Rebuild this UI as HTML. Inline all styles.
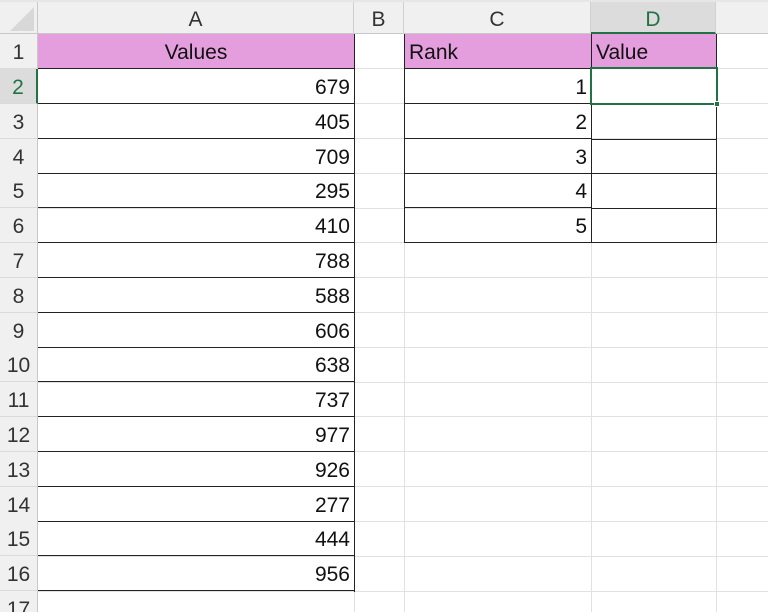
<!DOCTYPE html>
<html style="width:768px;height:612px;overflow:hidden"><head><meta charset="utf-8"><style>
body{margin:0;width:768px;height:612px;overflow:hidden;background:#fff;font-family:"Liberation Sans",sans-serif;position:relative}
div{position:absolute;box-sizing:border-box}
.h{left:0;width:768px;height:1px;background:#e1e1e1}
.v{top:34px;height:578px;width:1px;background:#e1e1e1}
.rn{left:0;width:38px;height:35px;background:#f0f0f0;color:#333;font-size:21px;line-height:38px;text-align:center;border-right:1px solid #c8c8c8;border-bottom:1px solid #dadada}
.c{font-size:21px;line-height:38px;height:35px;color:#111;overflow:hidden}
.r{text-align:right;padding-right:4px}
</style></head><body>
<div style="left:0;top:0;width:768px;height:34px;background:#f0f0f0;border-top:2px solid #e6e6e6;border-bottom:1px solid #c8c8c8"></div>
<div style="left:38px;top:2px;width:316px;height:32px;text-align:center;font-size:21px;line-height:36px;color:#333;border-right:1px solid #d0d0d0">A</div>
<div style="left:354px;top:2px;width:50px;height:32px;text-align:center;font-size:21px;line-height:36px;color:#333;border-right:1px solid #d0d0d0">B</div>
<div style="left:404px;top:2px;width:187px;height:32px;text-align:center;font-size:21px;line-height:36px;color:#333;border-right:1px solid #d0d0d0">C</div>
<div style="left:591px;top:2px;width:125px;height:32px;text-align:center;font-size:21px;line-height:36px;color:#217346;background:#dcdcdc;border-bottom:2px solid #217346;border-right:1px solid #d0d0d0">D</div>
<div style="left:0;top:2px;width:38px;height:32px;border-right:1px solid #c8c8c8"><div style="right:3px;bottom:3px;width:0;height:0;border-left:24px solid transparent;border-bottom:24px solid #d8d8d8"></div></div>
<div class="h" style="top:68px"></div><div class="h" style="top:103px"></div><div class="h" style="top:138px"></div><div class="h" style="top:173px"></div><div class="h" style="top:208px"></div><div class="h" style="top:242px"></div><div class="h" style="top:277px"></div><div class="h" style="top:312px"></div><div class="h" style="top:347px"></div><div class="h" style="top:382px"></div><div class="h" style="top:416px"></div><div class="h" style="top:451px"></div><div class="h" style="top:486px"></div><div class="h" style="top:521px"></div><div class="h" style="top:556px"></div><div class="h" style="top:591px"></div>
<div class="v" style="left:354px"></div><div class="v" style="left:404px"></div><div class="v" style="left:591px"></div><div class="v" style="left:716px"></div>
<div class="rn" style="top:34px">1</div>
<div class="rn" style="top:69px;color:#217346;background:#dcdcdc;border-right:2px solid #217346">2</div>
<div class="rn" style="top:104px">3</div><div class="rn" style="top:139px">4</div><div class="rn" style="top:173px">5</div><div class="rn" style="top:208px">6</div><div class="rn" style="top:243px">7</div><div class="rn" style="top:278px">8</div><div class="rn" style="top:313px">9</div><div class="rn" style="top:347px">10</div><div class="rn" style="top:382px">11</div><div class="rn" style="top:417px">12</div><div class="rn" style="top:452px">13</div><div class="rn" style="top:487px">14</div><div class="rn" style="top:521px">15</div><div class="rn" style="top:556px">16</div><div class="rn" style="top:591px;height:21px;overflow:hidden;border-bottom:none">17</div>
<div class="c" style="left:38px;top:34px;width:317px;background:#e49edd;text-align:center;border-right:1px solid #222;border-bottom:1px solid #222">Values</div>
<div style="left:38px;top:68px;width:317px;height:524px;border-right:1px solid #222"></div>
<div class="c r" style="left:38px;top:69px;width:316px;border-bottom:1px solid #222">679</div>
<div class="c r" style="left:38px;top:104px;width:316px;border-bottom:1px solid #222">405</div>
<div class="c r" style="left:38px;top:139px;width:316px;border-bottom:1px solid #222">709</div>
<div class="c r" style="left:38px;top:173px;width:316px;border-bottom:1px solid #222">295</div>
<div class="c r" style="left:38px;top:208px;width:316px;border-bottom:1px solid #222">410</div>
<div class="c r" style="left:38px;top:243px;width:316px;border-bottom:1px solid #222">788</div>
<div class="c r" style="left:38px;top:278px;width:316px;border-bottom:1px solid #222">588</div>
<div class="c r" style="left:38px;top:313px;width:316px;border-bottom:1px solid #222">606</div>
<div class="c r" style="left:38px;top:347px;width:316px;border-bottom:1px solid #222">638</div>
<div class="c r" style="left:38px;top:382px;width:316px;border-bottom:1px solid #222">737</div>
<div class="c r" style="left:38px;top:417px;width:316px;border-bottom:1px solid #222">977</div>
<div class="c r" style="left:38px;top:452px;width:316px;border-bottom:1px solid #222">926</div>
<div class="c r" style="left:38px;top:487px;width:316px;border-bottom:1px solid #222">277</div>
<div class="c r" style="left:38px;top:521px;width:316px;border-bottom:1px solid #222">444</div>
<div class="c r" style="left:38px;top:556px;width:316px;border-bottom:1px solid #222">956</div>
<div class="c" style="left:404px;top:34px;width:187px;background:#e49edd;padding-left:4px;border-left:1px solid #222;border-bottom:1px solid #222">Rank</div>
<div class="c" style="left:591px;top:34px;width:126px;background:#e49edd;padding-left:4px;border-left:1px solid #222;border-right:1px solid #222;border-bottom:1px solid #222">Value</div>
<div style="left:404px;top:68px;width:313px;height:175px;border:1px solid #222;border-top:none"></div>
<div style="left:591px;top:68px;width:1px;height:175px;background:#222"></div>
<div class="c r" style="left:405px;top:69px;width:186px;border-bottom:1px solid #222">1</div>
<div class="c r" style="left:405px;top:104px;width:186px;border-bottom:1px solid #222">2</div>
<div class="c r" style="left:405px;top:139px;width:186px;border-bottom:1px solid #222">3</div>
<div class="c r" style="left:405px;top:173px;width:186px;border-bottom:1px solid #222">4</div>
<div class="c r" style="left:405px;top:208px;width:186px">5</div>
<div style="left:592px;top:104px;width:124px;height:1px;background:#222"></div>
<div style="left:592px;top:139px;width:124px;height:1px;background:#222"></div>
<div style="left:592px;top:173px;width:124px;height:1px;background:#222"></div>
<div style="left:592px;top:208px;width:124px;height:1px;background:#222"></div>
<div style="left:590px;top:67px;width:128px;height:38px;border:2px solid #217346"></div>
<div style="left:714px;top:101px;width:6px;height:6px;background:#217346;border:1px solid #fff"></div>
</body></html>
